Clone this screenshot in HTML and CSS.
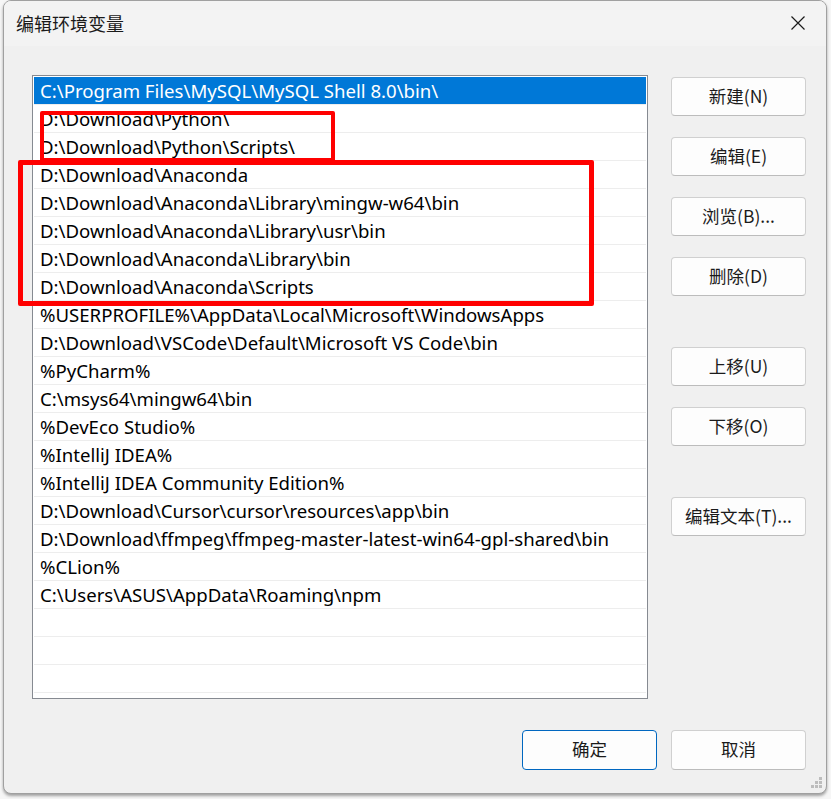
FILE: index.html
```html
<!DOCTYPE html>
<html lang="zh-CN">
<head>
<meta charset="utf-8">
<title>编辑环境变量</title>
<link rel="stylesheet" href="styles.css">
</head>
<body>
<div class="window">
  <div class="titlebar">
    <span class="title">编辑环境变量</span>
    <span class="close" aria-label="关闭">
      <svg width="16" height="16" viewBox="0 0 16 16"><path d="M1.5 1.5 L14.5 14.5 M14.5 1.5 L1.5 14.5" stroke="#1a1a1a" stroke-width="1.2" fill="none"/></svg>
    </span>
  </div>
  <div class="content">
    <div class="main">
      <div class="list">
        <div class="row selected">C:\Program Files\MySQL\MySQL Shell 8.0\bin\</div>
        <div class="row">D:\Download\Python\</div>
        <div class="row">D:\Download\Python\Scripts\</div>
        <div class="row">D:\Download\Anaconda</div>
        <div class="row">D:\Download\Anaconda\Library\mingw-w64\bin</div>
        <div class="row">D:\Download\Anaconda\Library\usr\bin</div>
        <div class="row">D:\Download\Anaconda\Library\bin</div>
        <div class="row">D:\Download\Anaconda\Scripts</div>
        <div class="row">%USERPROFILE%\AppData\Local\Microsoft\WindowsApps</div>
        <div class="row">D:\Download\VSCode\Default\Microsoft VS Code\bin</div>
        <div class="row">%PyCharm%</div>
        <div class="row">C:\msys64\mingw64\bin</div>
        <div class="row">%DevEco Studio%</div>
        <div class="row">%IntelliJ IDEA%</div>
        <div class="row">%IntelliJ IDEA Community Edition%</div>
        <div class="row">D:\Download\Cursor\cursor\resources\app\bin</div>
        <div class="row">D:\Download\ffmpeg\ffmpeg-master-latest-win64-gpl-shared\bin</div>
        <div class="row">%CLion%</div>
        <div class="row">C:\Users\ASUS\AppData\Roaming\npm</div>
        <div class="row"></div>
        <div class="row"></div>
        <div class="row"></div>
        <div class="row"></div>
      </div>
      <div class="side">
        <button class="btn">新建(N)</button>
        <button class="btn">编辑(E)</button>
        <button class="btn">浏览(B)...</button>
        <button class="btn">删除(D)</button>
        <button class="btn group">上移(U)</button>
        <button class="btn">下移(O)</button>
        <button class="btn group">编辑文本(T)...</button>
      </div>
    </div>
    <div class="footer">
      <button class="btn default">确定</button>
      <button class="btn">取消</button>
    </div>
  </div>
  <div class="annot annot-1"></div>
  <div class="annot annot-2"></div>
  <svg class="grip" width="12" height="12" viewBox="0 0 12 12">
    <rect x="8" y="0" width="3" height="3" fill="#bdbdbd"/>
    <rect x="4" y="4" width="3" height="3" fill="#bdbdbd"/>
    <rect x="8" y="4" width="3" height="3" fill="#bdbdbd"/>
    <rect x="0" y="8" width="3" height="3" fill="#bdbdbd"/>
    <rect x="4" y="8" width="3" height="3" fill="#bdbdbd"/>
    <rect x="8" y="8" width="3" height="3" fill="#bdbdbd"/>
  </svg>
</div>
</body>
</html>
```
FILE: styles.css
```css
html, body {
  margin: 0;
  padding: 0;
}
body {
  background: #f6f6f6;
  width: 831px;
  height: 799px;
  overflow: hidden;
  font-family: "Noto Sans", "Noto Sans CJK SC", sans-serif;
}
.window {
  position: relative;
  margin-left: 3px;
  width: 822px;
  height: 792px;
  background: #f0f0f0;
  border: 1px solid #a0a0a0;
  border-radius: 8px;
  box-shadow: 0 2px 3px rgba(0,0,0,0.35);
  overflow: hidden;
}
.titlebar {
  height: 45px;
  background: #f3f3f3;
  display: flex;
  align-items: center;
  justify-content: space-between;
  padding: 0 12px 0 12px;
}
.title {
  font-family: "Noto Sans CJK SC", sans-serif;
  font-size: 18px;
  color: #1a1a1a;
  margin-top: -2px;
}
.close {
  width: 16px;
  height: 16px;
  margin-right: 8px;
  margin-top: -1px;
  display: flex;
}
.content {
  padding: 29px 20px 0 28px;
}
.main {
  display: flex;
  gap: 23px;
}
.list {
  width: 614px;
  height: 621px;
  background: #ffffff;
  border: 1px solid #868a91;
  padding-top: 1px;
  box-sizing: content-box;
  overflow: hidden;
}
.row {
  height: 27px;
  line-height: 27px;
  margin: 0 1px;
  padding-left: 6px;
  border-bottom: 1px solid #ededed;
  font-size: 18.6px;
  color: #000;
  white-space: nowrap;
}
.row.selected {
  background: #0078d7;
  color: #ffffff;
}
.side {
  display: flex;
  flex-direction: column;
  gap: 21px;
  padding-top: 2px;
}
.btn {
  width: 135px;
  height: 39px;
  background: #fdfdfd;
  border: 1px solid #d0d0d0;
  border-bottom-color: #bcbcbc;
  border-radius: 4px;
  font-family: "Noto Sans CJK SC", sans-serif;
  font-size: 17.5px;
  color: #1b1b1b;
  padding: 0 0 3px 0;
}
.btn.group {
  margin-top: 30px;
}
.footer {
  display: flex;
  justify-content: flex-end;
  gap: 14px;
  margin-top: 31px;
}
.footer .btn {
  height: 40px;
}
.btn.default {
  border: 1px solid #0067c0;
}
.annot {
  position: absolute;
  border-style: solid;
  border-color: #ff0000;
  border-radius: 2px;
  box-sizing: border-box;
}
.annot-1 {
  left: 36px;
  top: 110px;
  width: 295px;
  height: 51px;
  border-width: 4px;
}
.annot-2 {
  left: 14px;
  top: 159px;
  width: 576px;
  height: 146px;
  border-width: 5px;
}
.grip {
  position: absolute;
  right: 3px;
  bottom: 4px;
}
```
